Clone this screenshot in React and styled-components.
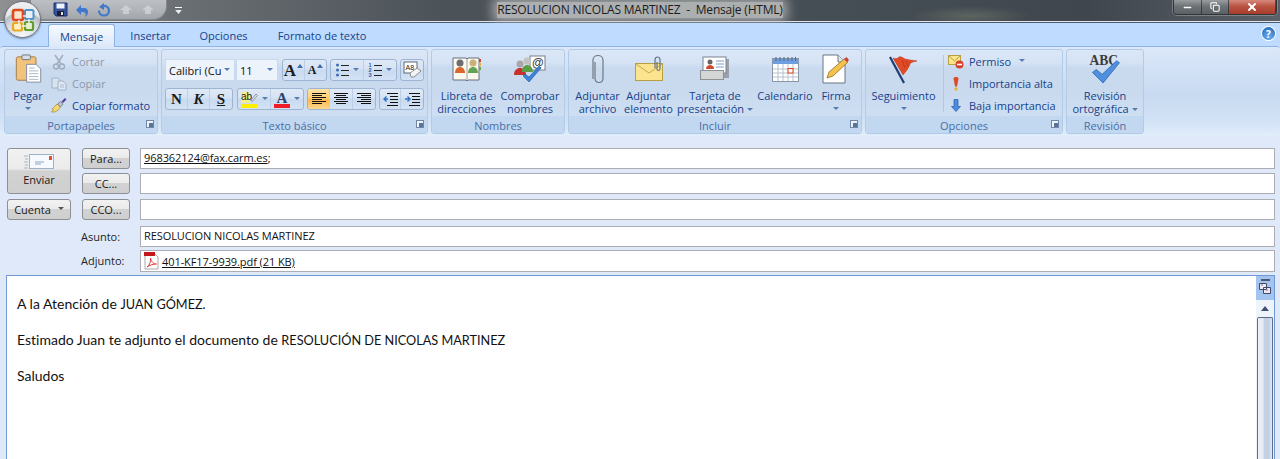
import React from "react"
import styled, { createGlobalStyle } from "styled-components"
import { X, Minus, Copy } from "lucide-react"

const GlobalStyle = createGlobalStyle`
  html, body {
    margin: 0;
    padding: 0;
    height: 100%;
    overflow: hidden;
    background: #dfe9f9;
    font-family: "Open Sans", "Noto Sans", sans-serif;
  }
  * { box-sizing: border-box; }
`

const Window = styled.div`
  position: relative;
  width: 1280px;
  height: 459px;
  display: flex;
  flex-direction: column;
  overflow: hidden;
`

/* title bar */
const TitleBar = styled.div`
  height: 23px;
  flex: none;
  display: flex;
  align-items: flex-start;
  padding-left: 30px;
  border-bottom: 1px solid #4b5a6c;
  box-shadow: inset 0 -1px 0 #dfe6ee;
  overflow: hidden;
  background:
    radial-gradient(ellipse 60px 10px at 970px 16px, rgba(120, 125, 110, 0.5), rgba(120, 125, 110, 0)),
    linear-gradient(90deg, #8e9092 0, #6a6f73 14%, #4b5258 35%, #454d54 70%, #3f464d 85%, #5a6066 100%);
`

const QuickAccess = styled.div`
  width: 137px;
  height: 20px;
  display: flex;
  align-items: center;
  gap: 3px;
  padding-left: 21px;
  border-radius: 0 0 14px 0;
  border: 1px solid #878b90;
  border-top: 0;
  background: linear-gradient(#bcbfc3, #b0b3b7 55%, #a2a5aa);
`

const QuickIcon = styled.span`
  width: 16px;
  height: 16px;
  display: inline-flex;
  align-items: center;
  justify-content: center;
  flex: none;
  margin-right: 3px;
  opacity: ${(p) => (p.$off ? 0.7 : 1)};
`

const Customize = styled.span`
  width: 7px;
  height: 7px;
  margin: 7px 0 0 8px;
  flex: none;
  background: linear-gradient(#fff 0 1px, transparent 1px 3px, #e8edf5 3px);
  clip-path: polygon(0 0, 100% 0, 100% 40%, 50% 100%, 0 40%);
`

const TitleText = styled.div`
  position: absolute;
  left: 0;
  right: 0;
  top: 2px;
  display: flex;
  justify-content: center;
  pointer-events: none;
`

const TitleGlow = styled.span`
  font-size: 12px;
  line-height: 16px;
  letter-spacing: -0.2px;
  white-space: pre;
  color: #1c1c1c;
  background: rgba(190, 191, 192, 0.85);
  box-shadow: 0 0 12px 4px rgba(190, 191, 192, 0.8);
`

const WindowControls = styled.div`
  position: absolute;
  top: 0;
  right: 3px;
  width: 104px;
  height: 15px;
  display: flex;
  border: 1px solid #31363b;
  border-top: 0;
  border-radius: 0 0 4px 4px;
  overflow: hidden;
  box-shadow: 0 0 0 1px rgba(255, 255, 255, 0.25);
`

const WindowButton = styled.div`
  flex: ${(p) => (p.$wide ? "0 0 47px" : "1")};
  display: flex;
  align-items: center;
  justify-content: center;
  border-right: 1px solid rgba(30, 30, 30, 0.6);
  background: ${(p) =>
    p.$close
      ? "linear-gradient(#d6897d, #b95442 45%, #a93c2a)"
      : "linear-gradient(#9a9d9f, #6d7276 45%, #5b6064)"};
  color: #fff;
`

const OfficeButton = styled.div`
  position: absolute;
  left: 4px;
  top: 1px;
  width: 37px;
  height: 37px;
  z-index: 5;
  border-radius: 50%;
  display: flex;
  align-items: center;
  justify-content: center;
  border: 1px solid #6f757b;
  background: radial-gradient(circle at 50% 100%, #f6f8fa 0, #d6dbe0 45%, #b6bcc3 62%, #e4e6e9 66%, #f7f7f8 100%);
  box-shadow: 0 1px 2px rgba(40, 60, 90, 0.55);
`

/* tabs */
const TabRow = styled.div`
  height: 23px;
  flex: none;
  display: flex;
  align-items: flex-end;
  padding-left: 48px;
  background: #bfdbff;
  position: relative;
`

const Tab = styled.div`
  height: ${(p) => (p.$active ? "23px" : "22px")};
  width: ${(p) => p.$w}px;
  margin-bottom: ${(p) => (p.$active ? "-1px" : "0")};
  display: flex;
  align-items: center;
  justify-content: center;
  font-size: 11px;
  color: #15428b;
  ${(p) =>
    p.$active &&
    `
    background: linear-gradient(#f6faff, #dbe8f9);
    border: 1px solid #8db2e3;
    border-bottom: 0;
    border-radius: 3px 3px 0 0;
    z-index: 2;
  `}
`

const HelpBadge = styled.span`
  position: absolute;
  right: 5px;
  top: 4px;
  width: 13px;
  height: 13px;
  border-radius: 50%;
  background: radial-gradient(circle at 50% 75%, #6cb0f0, #1b5fb4);
  box-shadow: 0 0 0 1px #fff;
  display: flex;
  align-items: center;
  justify-content: center;
  color: #fff;
  font-size: 10px;
  font-weight: 700;
`

/* ribbon */
const Ribbon = styled.div`
  height: 90px;
  flex: none;
  display: flex;
  gap: 3px;
  padding: 2px 0 2px 4px;
  border-top: 1px solid #8db2e3;
  border-radius: 3px;
  background: linear-gradient(#dbe8f9, #c8daf1 55%, #d3e3f6 85%, #e0edfb);
`

const Group = styled.section`
  width: ${(p) => p.$w}px;
  flex: none;
  display: flex;
  flex-direction: column;
  border: 1px solid #b3cbe7;
  border-radius: 3px;
  overflow: hidden;
  background: linear-gradient(#dbe7f7, #d5e3f5 15%, #c9d9ee 22%, #c9daef 50%, #d3e2f4);
`

const GroupBody = styled.div`
  flex: 1;
  display: flex;
  min-height: 0;
  padding: ${(p) => p.$pad || "0"};
`

const Caption = styled.div`
  position: relative;
  height: 17px;
  flex: none;
  display: flex;
  align-items: center;
  justify-content: center;
  padding-top: 1px;
  font-size: 11px;
  color: #4a6ea5;
  background: #c2d8f1;
`

const Launcher = styled.span`
  position: absolute;
  right: 3px;
  top: 4px;
  width: 8px;
  height: 8px;
  border: 1px solid #6f87a8;
  background: #eef3fa;
  &::after {
    content: "";
    position: absolute;
    right: 0;
    bottom: 0;
    width: 4px;
    height: 4px;
    background: #5a7396;
  }
`

const LargeButton = styled.div`
  width: ${(p) => p.$w}px;
  flex: none;
  display: flex;
  flex-direction: column;
  align-items: center;
  padding-top: 4px;
`

const LargeIcon = styled.div`
  height: 30px;
  display: flex;
  align-items: center;
  justify-content: center;
  flex: none;
`

const LargeLabel = styled.div`
  margin-top: 5px;
  font-size: 11px;
  line-height: 13px;
  text-align: center;
  color: #15428b;
  white-space: nowrap;
`

const Caret = styled.span`
  display: ${(p) => (p.$inline ? "inline-block" : "block")};
  flex: none;
  width: 0;
  height: 0;
  margin: ${(p) => (p.$inline ? "0 0 2px 3px" : "5px auto 0")};
  vertical-align: middle;
  border-left: 3px solid transparent;
  border-right: 3px solid transparent;
  border-top: 3px solid ${(p) => p.$color || "#567db1"};
`

const SmallStack = styled.div`
  display: flex;
  flex-direction: column;
  padding-top: 1px;
`

const SmallButton = styled.div`
  height: 22px;
  display: flex;
  align-items: center;
  gap: 5px;
  font-size: 11px;
  white-space: nowrap;
  color: ${(p) => (p.$off ? "#8d98a8" : "#15428b")};
`

const SmallIcon = styled.span`
  width: 16px;
  height: 16px;
  flex: none;
  display: inline-flex;
  align-items: center;
  justify-content: center;
  opacity: ${(p) => (p.$off ? 0.5 : 1)};
`

const VRule = styled.div`
  width: 1px;
  margin: 5px 4px 4px 2px;
  background: #b1c7e2;
  flex: none;
`

/* font tools */
const Tools = styled.div`
  display: flex;
  flex-direction: column;
  gap: 7px;
  padding: 9px 0 0 3px;
`

const ToolRow = styled.div`
  display: flex;
  gap: 3px;
`

const Combo = styled.div`
  width: ${(p) => p.$w}px;
  height: 22px;
  display: flex;
  align-items: center;
  justify-content: space-between;
  padding: 0 4px 0 3px;
  margin-right: ${(p) => p.$mr ?? 0}px;
  font-size: 11px;
  white-space: nowrap;
  color: #111;
  background: #edf3fb;
  border: 1px solid #c9daee;
`

const ToolGroup = styled.div`
  height: 22px;
  display: flex;
  margin-left: ${(p) => p.$ml ?? 0}px;
  border: 1px solid #9db4d2;
  border-radius: 3px;
  overflow: hidden;
  background: linear-gradient(#dfe9f7, #d6e3f4 45%, #c9daef 50%, #d3e2f5);
`

const Tool = styled.div`
  width: ${(p) => p.$w || 22}px;
  display: flex;
  align-items: center;
  justify-content: center;
  gap: 1px;
  border-right: 1px solid #bccfe6;
  &:last-child { border-right: 0; }
  ${(p) => p.$on && "background: linear-gradient(#ffe2a8, #ffcf73 45%, #fdb84c 55%, #fdd78f);"}
`

const Letter = styled.span`
  font-family: "Liberation Serif", serif;
  font-size: ${(p) => p.$size || 15}px;
  font-weight: 700;
  font-style: ${(p) => (p.$italic ? "italic" : "normal")};
  text-decoration: ${(p) => (p.$under ? "underline" : "none")};
  color: #1a1a1a;
  line-height: 1;
`

/* address form */
const Form = styled.div`
  height: 139px;
  flex: none;
  display: grid;
  grid-template-columns: 64px 48px 1fr;
  grid-template-rows: 25px 26px 27px 24px 24px;
  column-gap: 11px;
  padding: 12px 5px 0 7px;
  background: #dfe9f9;
`

const SendButton = styled.div`
  grid-row: 1 / span 2;
  height: 46px;
  display: flex;
  flex-direction: column;
  align-items: center;
  justify-content: center;
  gap: 2px;
  padding-bottom: 1px;
  font-size: 11px;
  color: #1a1a1a;
  border: 1px solid #8c8f93;
  border-radius: 3px;
  background: linear-gradient(#f2f2f2, #ebebeb 45%, #d2d2d2 50%, #cfcfcf);
`

const FormButton = styled.div`
  height: 21px;
  display: flex;
  align-items: center;
  justify-content: center;
  gap: 4px;
  padding-bottom: 1px;
  font-size: 11px;
  color: #1a1a1a;
  border: 1px solid #8c8f93;
  border-radius: 3px;
  background: linear-gradient(#f2f2f2, #ebebeb 45%, #d2d2d2 50%, #cfcfcf);
`

const FieldLabel = styled.div`
  grid-column: 1 / span 2;
  height: 21px;
  padding: 0 0 1px 74px;
  display: flex;
  align-items: center;
  font-size: 11px;
  color: #1e1e1e;
`

const Field = styled.div`
  height: ${(p) => p.$h || 21}px;
  margin-left: -1px;
  display: flex;
  align-items: center;
  padding: 0 0 ${(p) => (p.$h ? 0 : 2)}px 3px;
  font-size: 11px;
  letter-spacing: -0.08px;
  color: #111;
  background: #fff;
  border: 1px solid #abadb3;
  white-space: nowrap;
`

const Link = styled.span`
  text-decoration: underline;
  margin-left: ${(p) => p.$ml ?? 0}px;
`

/* message body */
const Body = styled.div`
  flex: 1;
  min-height: 0;
  margin: 0 5px 0 6px;
  display: flex;
  background: #fff;
  border: 1px solid #6f9ad6;
  border-bottom: 0;
`

const Message = styled.div`
  flex: 1;
  padding: 19px 0 0 10px;
  font-family: Lato, "Open Sans", sans-serif;
  font-size: 14px;
  font-variant-ligatures: none;
  line-height: 18px;
  color: #111;
`

const Line = styled.div`
  min-height: 18px;
`

const Caps = styled.span`
  font-size: 12.7px;
`

const ScrollBar = styled.div`
  width: 18px;
  flex: none;
  display: flex;
  flex-direction: column;
  background: #eff4fb;
`

const RulerToggle = styled.div`
  height: 24px;
  flex: none;
  display: flex;
  flex-direction: column;
  align-items: center;
  gap: 2px;
  padding-top: 3px;
  background: #a3c4ef;
  &::before {
    content: "";
    width: 9px;
    height: 2px;
    background: #4a5a78;
  }
`

const ArrowUp = styled.div`
  height: 17px;
  flex: none;
  display: flex;
  align-items: center;
  justify-content: center;
  &::before {
    content: "";
    border-left: 4px solid transparent;
    border-right: 4px solid transparent;
    border-bottom: 5px solid #3f4e78;
  }
`

const Thumb = styled.div`
  flex: 1;
  margin: 0 1px;
  border: 1px solid #5b6b90;
  border-bottom: 0;
  border-radius: 2px 2px 0 0;
  background: linear-gradient(90deg, #eef1f6, #e6eaf1 35%, #c5d2e3 45%, #c2d0e2 75%, #e4e9f1);
`

/* drawings */
const ClipboardIcon = () => (
  <svg width="27" height="30" viewBox="0 0 28 32">
    <rect x="1" y="3" width="21" height="25" rx="2" fill="#f2c37c" stroke="#a47b45" />
    <rect x="7" y="1" width="9" height="5" rx="1" fill="#d9dde2" stroke="#6e7378" />
    <path d="M12 11h10l5 5v14H12z" fill="#fff" stroke="#7f8b9b" />
    <path d="M14.500 15h6M14.500 18h10M14.500 21h10M14.500 24h10M14.500 27h10" stroke="#a7b3c2" />
  </svg>
)

const ScissorsIcon = () => (
  <svg width="14" height="16" viewBox="0 0 14 16">
    <path d="M3 1l6 9M11 1L5 10" stroke="#6f7a8a" strokeWidth="1.600" fill="none" />
    <circle cx="4" cy="12.500" r="2.500" fill="none" stroke="#6f7a8a" strokeWidth="1.300" />
    <circle cx="10" cy="12.500" r="2.500" fill="none" stroke="#6f7a8a" strokeWidth="1.300" />
  </svg>
)

const CopyIcon = () => (
  <svg width="16" height="14" viewBox="0 0 16 14">
    <path d="M1 1h6l2 2v8H1z" fill="#e8edf3" stroke="#7f8c9d" />
    <path d="M7 4h5l3 3v6H7z" fill="#f4f6f9" stroke="#7f8c9d" />
    <path d="M9 8h4M9 10h4" stroke="#98a4b4" />
  </svg>
)

const BrushIcon = () => (
  <svg width="17" height="16" viewBox="0 0 16 16">
    <path d="M9.500 4.500l2.500 2.500-2.500 3-3-3z" fill="#b9c4cf" stroke="#5f6a78" strokeWidth="0.700" />
    <path d="M10.500 4.500L14 1l1.500 1.500L12 6z" fill="#5d3a9c" />
    <path d="M6 7l3.300 3.300c-1 2-3 3.700-5.300 4.700H0.500L2.500 12.500 1 12z" fill="#f4d572" stroke="#a58a35" strokeWidth="0.700" />
  </svg>
)

const ListIcon = ({ numbered }) => (
  <svg width="14" height="14" viewBox="0 0 14 14">
    {[2, 7, 12].map((y, i) =>
      numbered ? (
        <text key={y} x="0.500" y={y + 2} fontSize="5.500" fontWeight="700" fontFamily="Liberation Sans" fill="#2d5fa8">{i + 1}</text>
      ) : (
        <circle key={y} cx="2.500" cy={y} r="1.500" fill="#3c6eb4" />
      )
    )}
    <path d="M6 2.500h8M6 7.500h8M6 12.500h8" stroke="#222" />
  </svg>
)

const ScriptArrow = () => (
  <svg width="6" height="4" viewBox="0 0 6 4" style={{ marginBottom: 9 }}>
    <path d="M0 4l3-4 3 4z" fill="#3f6eaa" />
  </svg>
)

const EraserIcon = () => (
  <svg width="20" height="18" viewBox="0 0 20 18">
    <rect x="2" y="1" width="13" height="11" fill="#fff" stroke="#5d6875" />
    <text x="3.500" y="8.500" fontSize="7" fontFamily="Liberation Sans" fill="#222">A8</text>
    <path d="M8 12l7-5 4 3-7 6H9z" fill="#f3f3f3" stroke="#8a8f96" />
  </svg>
)

const HighlightIcon = () => (
  <svg width="17" height="17" viewBox="0 0 17 17">
    <rect x="0" y="1" width="9" height="11" fill="#f5ee8a" />
    <text x="0" y="9" fontSize="10" fontFamily="Liberation Sans" fill="#1a1a1a">ab</text>
    <path d="M10 9l5-6 1.500 1.500-5.500 6z" fill="#dfe6ee" stroke="#75808e" strokeWidth="0.800" />
    <rect x="0" y="13" width="16" height="4" fill="#ffee00" />
  </svg>
)

const FontColorIcon = () => (
  <svg width="16" height="17" viewBox="0 0 16 17">
    <text x="8" y="11.500" textAnchor="middle" fontSize="15" fontWeight="700" fontFamily="Liberation Serif" fill="#2b3f6c">A</text>
    <rect x="0" y="13" width="16" height="4" fill="#ee1c25" />
  </svg>
)

const AlignIcon = ({ mode }) => {
  const rows = [14, 10, 14, 10, 14, 10]
  return (
    <svg width="14" height="12" viewBox="0 0 14 12" shapeRendering="crispEdges">
      {rows.map((w, i) => {
        const x = mode === "left" ? 0 : mode === "right" ? 14 - w : (14 - w) / 2
        return <rect key={i} x={x} y={i * 2} width={w} height="1" fill="#111" />
      })}
    </svg>
  )
}

const IndentIcon = ({ flip }) => (
  <svg width="16" height="14" viewBox="0 0 16 14">
    <path d="M5 1.500h11M8 4.500h8M8 7.500h8M8 10.500h8M5 13.500h11" stroke="#111" />
    <path d={flip ? "M1 7h4M3.500 4.500L6 7 3.500 9.500" : "M2 7h4M4.500 4.500L2 7l2.500 2.500"} stroke="#2f72c8" strokeWidth="1.400" fill="none" />
  </svg>
)

const AddressBookIcon = () => (
  <svg width="30" height="28" viewBox="0 0 30 28">
    <path d="M1 3h13l1 1 1-1h11v22H16l-1 1-1-1H1z" fill="#fbf8ee" stroke="#69707c" />
    <path d="M15 4v21" stroke="#9aa1ac" />
    <rect x="27" y="4" width="2" height="3" fill="#c8473b" />
    <rect x="27" y="8" width="2" height="3" fill="#e5b040" />
    <rect x="27" y="12" width="2" height="3" fill="#6aa84f" />
    <circle cx="8" cy="8" r="3.500" fill="#6d6d6d" />
    <path d="M3 18c0-4 2.500-6 5-6s5 2 5 6z" fill="#d9662c" />
    <circle cx="21" cy="8" r="3.500" fill="#c9b27a" />
    <path d="M16 18c0-4 2.500-6 5-6s5 2 5 6z" fill="#5fa353" />
  </svg>
)

const CheckNamesIcon = () => (
  <svg width="32" height="28" viewBox="0 0 32 28">
    <rect x="16" y="1" width="15" height="14" fill="#fff" stroke="#767f8c" />
    <text x="18" y="12" fontSize="12" fontWeight="700" fontFamily="Liberation Sans" fill="#444">@</text>
    <circle cx="6" cy="9" r="3.500" fill="#a7a7a7" />
    <path d="M0 20c0-5 3-7 6-7s6 2 6 7z" fill="#c9302c" />
    <circle cx="13" cy="6" r="3.500" fill="#c2c2c2" />
    <path d="M8 17c0-5 2.500-7 5-7s6 2 6 7z" fill="#5c9e45" />
    <path d="M11 19l4 3 10-11 2 2-12 14-6-6z" fill="#3d83d6" stroke="#1c5aa8" strokeWidth="0.600" />
  </svg>
)

const PaperclipIcon = () => (
  <svg width="14" height="31" viewBox="0 0 14 31">
    <path d="M4 8v16c0 6 8 6 8 0V6C12 0 2 0 2 6v19" fill="none" stroke="#6f7781" strokeWidth="1.200" />
  </svg>
)

const MailClipIcon = () => (
  <svg width="28" height="27" viewBox="0 0 28 27">
    <rect x="0.500" y="7.500" width="27" height="17" fill="#fbe48d" stroke="#b8a03e" />
    <path d="M1 8l13 9 13-9" fill="none" stroke="#c2a94a" />
    <path d="M20 12V4c0-4 5-4 5 0v9c0 2-3 2-3 0V6" fill="none" stroke="#60758f" strokeWidth="1.200" />
  </svg>
)

const CardIcon = () => (
  <svg width="30" height="26" viewBox="0 0 30 26">
    <rect x="6" y="3" width="23" height="19" fill="#9aa1ac" />
    <rect x="3" y="1" width="23" height="16" fill="#fff" stroke="#7b838f" />
    <circle cx="10" cy="6" r="2.500" fill="#666" />
    <path d="M6 13c0-3 2-4 4-4s4 1 4 4z" fill="#cf4b2f" />
    <path d="M16 5h8M16 8h8M16 11h8" stroke="#7d9cc8" />
    <rect x="0.500" y="14.500" width="23" height="9" fill="#d4d5d5" stroke="#8e9196" />
  </svg>
)

const CalendarIcon = () => (
  <svg width="27" height="26" viewBox="0 0 27 26">
    <rect x="0.500" y="2.500" width="26" height="23" fill="#fff" stroke="#8a96a6" />
    <rect x="1" y="3" width="25" height="5" fill="#6d9fe0" />
    <path d="M4 1v4M8 1v4M12 1v4M16 1v4M20 1v4M23.500 1v4" stroke="#55637a" />
    <path d="M1 13h25M1 17h25M1 21h25M6 8v17M11 8v17M16 8v17M21 8v17" stroke="#b5c1cf" />
    <rect x="16" y="12.500" width="5" height="4.500" fill="#fff" stroke="#e2401c" />
  </svg>
)

const SignatureIcon = () => (
  <svg width="28" height="30" viewBox="0 0 28 30">
    <path d="M1 1h15l7 7v21H1z" fill="#fff" stroke="#6b7683" />
    <path d="M16 1v7h7" fill="#e4e8ed" stroke="#6b7683" />
    <path d="M5 24l2-6 15-13 4 3-15 14z" fill="#f5c24d" stroke="#926d28" strokeWidth="0.800" />
    <path d="M22 5l2.500-2 2.500 3-2 2z" fill="#c9433b" />
  </svg>
)

const FlagIcon = () => (
  <svg width="29" height="29" viewBox="0 0 29 29">
    <path d="M1 2l14 26" stroke="#1f3e74" strokeWidth="2.200" />
    <path d="M4 3c2 1 4 1 6-1 2-1 4 1 6 2 3 1 7 1 12 2-4 1-6 1-7 3-1 3-2 4-3 6-1 2-3 3-4 5C11 14 7 9 4 3z" fill="#e24a26" stroke="#b12e12" strokeWidth="0.500" />
    <path d="M13 5l3 8M17 6l2 5" stroke="#b12e12" strokeWidth="0.700" />
  </svg>
)

const DenyMailIcon = () => (
  <svg width="16" height="14" viewBox="0 0 16 14">
    <rect x="0.500" y="0.500" width="12" height="9" fill="#fbe48d" stroke="#b8a03e" />
    <path d="M1 1l5.500 5L12 1" fill="none" stroke="#b8a03e" />
    <circle cx="11.500" cy="9.500" r="4" fill="#d8402c" />
    <rect x="9" y="8.700" width="5" height="1.600" fill="#fff" />
  </svg>
)

const ImportantIcon = () => (
  <svg width="8" height="14" viewBox="0 0 8 14">
    <path d="M1.500 1.500c0-2 5-2 5 0L5 9.500H3z" fill="#de4a26" />
    <circle cx="4" cy="12" r="1.700" fill="#e6b63a" />
  </svg>
)

const DownArrowIcon = () => (
  <svg width="10" height="13" viewBox="0 0 10 13">
    <path d="M3 0.500h4v7h2.500L5 12.500 0.500 7.500H3z" fill="#4d8be0" stroke="#2a5ca8" strokeWidth="0.700" />
  </svg>
)

const SpellIcon = () => (
  <svg width="32" height="30" viewBox="0 0 32 31">
    <text x="0" y="11" fontSize="14" fontWeight="700" fontFamily="Liberation Serif" fill="#3c3c3c">ABC</text>
    <path d="M3 19l4-3 6 5L28 7l3 2-17 21z" fill="#4f8fe0" stroke="#265ea8" strokeWidth="0.700" />
  </svg>
)

const OfficeLogo = () => (
  <svg width="24" height="24" viewBox="0 0 24 24">
    <rect x="14" y="2" width="8.500" height="9" rx="1.500" fill="#e8f1f7" stroke="#4f93c9" strokeWidth="2" />
    <rect x="14" y="14" width="8" height="8" rx="1.500" fill="#e6f1d4" stroke="#5f9e2f" strokeWidth="2.200" />
    <rect x="2" y="15" width="9" height="7.500" rx="1.500" fill="#fcefc4" stroke="#e8a91f" strokeWidth="2.200" />
    <rect x="2" y="2" width="10" height="10" rx="2" fill="#fbe2cf" stroke="#e0491a" strokeWidth="2.600" />
    <path d="M12 8h3M8 12v4M18 11v4M11 18h4" stroke="#f4f4f4" strokeWidth="1.400" />
  </svg>
)

const SaveIcon = () => (
  <svg width="15" height="15" viewBox="0 0 15 15">
    <path d="M1 1h13v13H3l-2-2z" fill="#35529b" stroke="#1e3270" />
    <rect x="3.500" y="1.500" width="8" height="5" fill="#eef2fa" />
    <rect x="4" y="9" width="7" height="5" fill="#1c1f33" />
    <rect x="8" y="10" width="2" height="3" fill="#dfe3ee" />
  </svg>
)

const UndoIcon = () => (
  <svg width="14" height="14" viewBox="0 0 14 14">
    <path d="M1 7l5-5v3h3c3 0 4 2 4 4 0 2-1 4-3 5 1-2 1-5-2-5H6v3z" fill="#3f78cc" />
  </svg>
)

const RedoIcon = () => (
  <svg width="14" height="14" viewBox="0 0 14 14">
    <path d="M5 3.500c3.500-1.500 7 .5 7 4 0 3-2.300 5-5 5S2 10.500 2 7.500" fill="none" stroke="#3f78cc" strokeWidth="2.200" />
    <path d="M7 0L2 4l5 3z" fill="#3f78cc" />
  </svg>
)

const NavIcon = ({ left }) => (
  <svg width="12" height="10" viewBox="0 0 12 10" style={left ? undefined : { transform: "scaleX(-1)" }}>
    <path d="M6 0L0 5h3v4h6V5h3z" fill="#d5dbe2" />
  </svg>
)

const EnvelopeIcon = () => (
  <svg width="30" height="16" viewBox="0 0 30 16">
    <path d="M0 2h4M1 5h3M0 8h4M1 11h3M0 14h4" stroke="#a6b5c7" />
    <rect x="5.500" y="0.500" width="24" height="14" fill="#f6f9fd" stroke="#9fb1c6" />
    <rect x="25" y="2" width="3" height="4" fill="#e2512d" />
    <path d="M11 8h9M11 10h6" stroke="#8aa4c4" />
  </svg>
)

const PdfIcon = () => (
  <svg width="15" height="18" viewBox="0 0 15 18">
    <path d="M1 1h9l4 4v12H1z" fill="#fff" stroke="#a8a8a8" />
    <rect x="0" y="0" width="11" height="4" fill="#c4161c" />
    <path d="M3 15c3-2 4-6 3.500-9 1 4 3 6 6 6-3 0-7 1-9.500 3z" fill="none" stroke="#e0403a" />
  </svg>
)

const CaptureIcon = () => (
  <svg width="12" height="11" viewBox="0 0 12 11">
    <path d="M0.500 0.500h7v6h-7zM4.500 4.500h7v6h-7z" fill="#f0e8f2" stroke="#3f4a66" />
    <path d="M2 2h2M7 7h2" stroke="#8b6b9a" />
  </svg>
)

const App = () => {
  return (
    <Window>
      <GlobalStyle />
      <TitleBar>
        <QuickAccess>
          <QuickIcon><SaveIcon /></QuickIcon>
          <QuickIcon><UndoIcon /></QuickIcon>
          <QuickIcon><RedoIcon /></QuickIcon>
          <QuickIcon $off><NavIcon left /></QuickIcon>
          <QuickIcon $off><NavIcon /></QuickIcon>
        </QuickAccess>
        <Customize />
        <TitleText><TitleGlow>{"RESOLUCION NICOLAS MARTINEZ  -  Mensaje (HTML)"}</TitleGlow></TitleText>
        <WindowControls>
          <WindowButton><Minus size={11} strokeWidth={3} /></WindowButton>
          <WindowButton><Copy size={10} strokeWidth={2.5} /></WindowButton>
          <WindowButton $wide $close><X size={12} strokeWidth={4} /></WindowButton>
        </WindowControls>
      </TitleBar>
      <OfficeButton><OfficeLogo /></OfficeButton>

      <TabRow>
        <Tab $active $w={67}>Mensaje</Tab>
        <Tab $w={71}>Insertar</Tab>
        <Tab $w={75}>Opciones</Tab>
        <Tab $w={122}>Formato de texto</Tab>
        <HelpBadge>?</HelpBadge>
      </TabRow>

      <Ribbon>
        <Group $w={154}>
          <GroupBody>
            <LargeButton $w={46}>
              <LargeIcon><ClipboardIcon /></LargeIcon>
              <LargeLabel>Pegar</LargeLabel>
              <Caret />
            </LargeButton>
            <SmallStack>
              <SmallButton $off><SmallIcon $off><ScissorsIcon /></SmallIcon>Cortar</SmallButton>
              <SmallButton $off><SmallIcon $off><CopyIcon /></SmallIcon>Copiar</SmallButton>
              <SmallButton><SmallIcon><BrushIcon /></SmallIcon>Copiar formato</SmallButton>
            </SmallStack>
          </GroupBody>
          <Caption>Portapapeles<Launcher /></Caption>
        </Group>

        <Group $w={267}>
          <GroupBody>
            <Tools>
              <ToolRow>
                <Combo $w={70} $mr={-2}>Calibri (Cu<Caret $inline /></Combo>
                <Combo $w={42} $mr={1}>11<Caret $inline /></Combo>
                <ToolGroup>
                  <Tool $w={22}><Letter $size={17}>A</Letter><ScriptArrow /></Tool>
                  <Tool $w={21}><Letter $size={12}>A</Letter><ScriptArrow /></Tool>
                </ToolGroup>
                <ToolGroup>
                  <Tool $w={33}><ListIcon /><Caret $inline /></Tool>
                  <Tool $w={32}><ListIcon numbered /><Caret $inline /></Tool>
                </ToolGroup>
                <ToolGroup>
                  <Tool $w={22}><EraserIcon /></Tool>
                </ToolGroup>
              </ToolRow>
              <ToolRow>
                <ToolGroup>
                  <Tool><Letter>N</Letter></Tool>
                  <Tool><Letter $italic>K</Letter></Tool>
                  <Tool><Letter $under>S</Letter></Tool>
                </ToolGroup>
                <ToolGroup $ml={1}>
                  <Tool $w={33}><HighlightIcon /><Caret $inline /></Tool>
                  <Tool $w={32}><FontColorIcon /><Caret $inline /></Tool>
                </ToolGroup>
                <ToolGroup>
                  <Tool $on><AlignIcon mode="left" /></Tool>
                  <Tool $w={23}><AlignIcon mode="center" /></Tool>
                  <Tool><AlignIcon mode="right" /></Tool>
                </ToolGroup>
                <ToolGroup>
                  <Tool $w={21}><IndentIcon /></Tool>
                  <Tool><IndentIcon flip /></Tool>
                </ToolGroup>
              </ToolRow>
            </Tools>
          </GroupBody>
          <Caption>Texto básico<Launcher /></Caption>
        </Group>

        <Group $w={134}>
          <GroupBody>
            <LargeButton $w={69}>
              <LargeIcon><AddressBookIcon /></LargeIcon>
              <LargeLabel>Libreta de<br />direcciones</LargeLabel>
            </LargeButton>
            <LargeButton $w={58}>
              <LargeIcon><CheckNamesIcon /></LargeIcon>
              <LargeLabel>Comprobar<br />nombres</LargeLabel>
            </LargeButton>
          </GroupBody>
          <Caption>Nombres</Caption>
        </Group>

        <Group $w={294}>
          <GroupBody $pad="0 0 0 3px">
            <LargeButton $w={51}>
              <LargeIcon><PaperclipIcon /></LargeIcon>
              <LargeLabel>Adjuntar<br />archivo</LargeLabel>
            </LargeButton>
            <LargeButton $w={51}>
              <LargeIcon><MailClipIcon /></LargeIcon>
              <LargeLabel>Adjuntar<br />elemento</LargeLabel>
            </LargeButton>
            <LargeButton $w={82}>
              <LargeIcon><CardIcon /></LargeIcon>
              <LargeLabel>Tarjeta de<br />presentación<Caret $inline /></LargeLabel>
            </LargeButton>
            <LargeButton $w={58}>
              <LargeIcon><CalendarIcon /></LargeIcon>
              <LargeLabel>Calendario</LargeLabel>
            </LargeButton>
            <LargeButton $w={44}>
              <LargeIcon><SignatureIcon /></LargeIcon>
              <LargeLabel>Firma</LargeLabel>
              <Caret />
            </LargeButton>
          </GroupBody>
          <Caption>Incluir<Launcher /></Caption>
        </Group>

        <Group $w={198}>
          <GroupBody>
            <LargeButton $w={75}>
              <LargeIcon><FlagIcon /></LargeIcon>
              <LargeLabel>Seguimiento</LargeLabel>
              <Caret />
            </LargeButton>
            <VRule />
            <SmallStack>
              <SmallButton><SmallIcon><DenyMailIcon /></SmallIcon>Permiso<Caret $inline /></SmallButton>
              <SmallButton><SmallIcon><ImportantIcon /></SmallIcon>Importancia alta</SmallButton>
              <SmallButton><SmallIcon><DownArrowIcon /></SmallIcon>Baja importancia</SmallButton>
            </SmallStack>
          </GroupBody>
          <Caption>Opciones<Launcher /></Caption>
        </Group>

        <Group $w={78}>
          <GroupBody>
            <LargeButton $w={76}>
              <LargeIcon><SpellIcon /></LargeIcon>
              <LargeLabel>Revisión<br />ortográfica<Caret $inline /></LargeLabel>
            </LargeButton>
          </GroupBody>
          <Caption>Revisión</Caption>
        </Group>
      </Ribbon>

      <Form>
        <SendButton><EnvelopeIcon />Enviar</SendButton>
        <FormButton>Para...</FormButton>
        <Field><Link>968362124@fax.carm.es</Link>;</Field>
        <FormButton>CC...</FormButton>
        <Field />
        <FormButton>Cuenta<Caret $inline $color="#555" /></FormButton>
        <FormButton>CCO...</FormButton>
        <Field />
        <FieldLabel>Asunto:</FieldLabel>
        <Field>RESOLUCION NICOLAS MARTINEZ</Field>
        <FieldLabel>Adjunto:</FieldLabel>
        <Field $h={22}><PdfIcon /><Link $ml={3}>401-KF17-9939.pdf (21 KB)</Link></Field>
      </Form>

      <Body>
        <Message>
          <Line>A la Atención de <Caps>JUAN GÓMEZ.</Caps></Line>
          <Line />
          <Line>Estimado Juan te adjunto el documento de <Caps>RESOLUCIÓN DE NICOLAS MARTINEZ</Caps></Line>
          <Line />
          <Line>Saludos</Line>
        </Message>
        <ScrollBar>
          <RulerToggle><CaptureIcon /></RulerToggle>
          <ArrowUp />
          <Thumb />
        </ScrollBar>
      </Body>
    </Window>
  )
}

export default App
